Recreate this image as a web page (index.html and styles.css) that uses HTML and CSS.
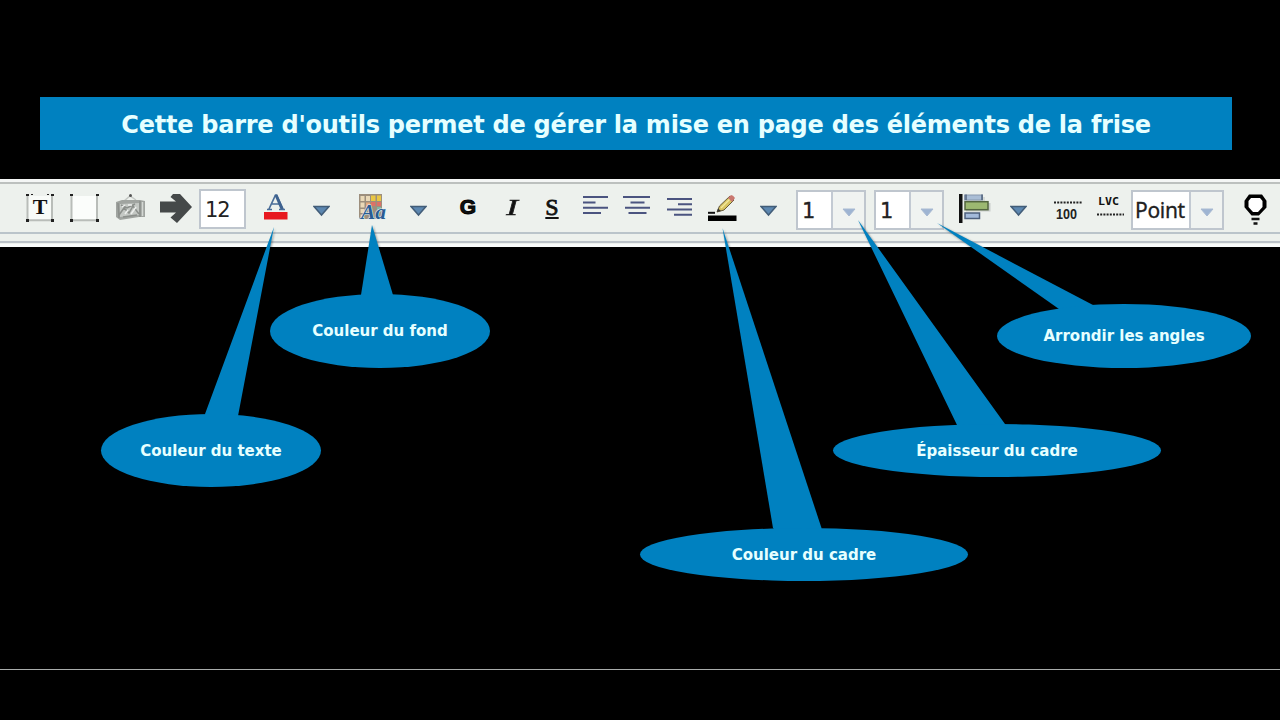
FILE: index.html
```
<!DOCTYPE html>
<html lang="fr">
<head>
  <meta charset="UTF-8" />
  <meta name="viewport" content="width=device-width, initial-scale=1.0"/>
  <title>Barre d'outils de la frise</title>
  <link rel="stylesheet" href="styles.css">
</head>
<body>
  <main class="slide">
    <h1 class="titre"><span>Cette barre d'outils permet de gérer la mise en page des éléments de la frise</span></h1>

    <div class="barre">
      <div class="outils">
        <!-- zone de texte -->
        <svg class="icone i-texte" width="30" height="40" viewBox="0 0 30 40">
          <rect x="3" y="7" width="24" height="24" fill="#f8fbf8"/>
          <path d="M2.5 7V31M27 7V31M2 31.3H28" stroke="#b9bdb9" stroke-width="2" fill="none"/>
          <path d="M1 5h3v2H1zM6 5h2v1H6zM22 5h2v1h-2zM26 5h3v2h-3zM1 30h3v3H1zM26 30h3v3h-3z" fill="#222"/>
          <text x="15" y="25" class="t-serif" text-anchor="middle">T</text>
        </svg>
        <!-- cadre vide -->
        <svg class="icone i-cadre" width="31" height="40" viewBox="0 0 31 40">
          <rect x="3" y="7" width="25" height="24" fill="#fbfdfb"/>
          <path d="M2.5 7V31M28 7V31M2 31.3H29" stroke="#b9bdb9" stroke-width="2" fill="none"/>
          <path d="M1 5h3v2H1zM27 5h3v2h-3zM1 30h3v3H1zM27 30h3v3h-3z" fill="#222"/>
        </svg>
        <!-- image -->
        <svg class="icone i-image" width="31" height="40" viewBox="0 0 31 40">
          <path d="M9 12L15 7L21 11" fill="none" stroke="#c4c8c4" stroke-width="1.500"/>
          <circle cx="15.500" cy="6.500" r="1.500" fill="#555"/>
          <path d="M1 13L7 11L25 11L30 12V28L24 28L5 31L1 28z" fill="#a0a4a0"/>
          <path d="M5 15L24 14V26L5 28z" fill="#c4c8c4"/>
          <path d="M4 26L9 19L14 24L18 17L24 25M6 16L12 19L20 15M25 12V28M3 14L4 29M8 28L22 26" fill="none" stroke="#8b8f8b" stroke-width="1.500"/>
          <path d="M10 25L13 21M16 25L21 18M7 18L10 16M13 16H17" fill="none" stroke="#eef0ee" stroke-width="1.500"/>
          <path d="M27.500 13V27" stroke="#d4d8d4" stroke-width="1.500"/>
        </svg>
        <!-- flèche -->
        <svg class="icone i-fleche" width="32" height="40" viewBox="0 0 32 40">
          <path d="M0 12.500H16L10.500 8L13 5H20L32 18L17 34L10.500 28.500L16 23.500H0z" fill="#454949"/>
        </svg>
        <span class="champ taille">12</span>
        <!-- couleur du texte -->
        <svg class="icone i-couleur" width="24" height="40" viewBox="0 0 24 40">
          <path d="M5 20L11.500 6H12.500L19 20M8 15H16M3 20.500H8M15 20.500H21" fill="none" stroke="#4a6d98" stroke-width="1.700"/>
          <path d="M12 6L18 20" stroke="#3e628f" stroke-width="3"/>
          <rect x="0" y="23" width="23.500" height="7.500" fill="#e7191f"/>
        </svg>
        <svg class="icone fl fl1" width="17" height="40" viewBox="0 0 17 40"><path d="M1 17.500H16L8.500 26z"/></svg>
        <!-- couleur du fond -->
        <svg class="icone i-fond" width="28" height="40" viewBox="0 0 28 40">
          <rect x="0" y="5" width="23" height="25" fill="#9d8f7d"/>
          <path d="M1.500 7h4v5h-4zM7 7h4v5H7zM1.500 13.500h4v5h-4zM1.500 20h4v4h-4zM1.500 25.500h3v3h-3z" fill="#ead9b7"/>
          <path d="M12 6.500h4.500V12H12zM18 6.500h4V12h-4z" fill="#eac743"/>
          <path d="M7 13.500h4v5H7z" fill="#e4aa7b"/>
          <path d="M12 13h4.500v4H12zM18 13h4v4h-4z" fill="#dd7167"/>
          <path d="M18 18h4v5h-4z" fill="#7eb7a1"/>
          <text x="2" y="30" class="t-aa" textLength="25" lengthAdjust="spacingAndGlyphs">Aa</text>
        </svg>
        <svg class="icone fl fl2" width="17" height="40" viewBox="0 0 17 40"><path d="M1 17.500H16L8.500 26z"/></svg>

        <span class="lettre gras">G</span>
        <span class="lettre ital">I</span>
        <span class="lettre soul">S</span>

        <!-- alignements -->
        <svg class="icone al al1" width="26" height="40" viewBox="0 0 26 40"><path d="M1 8H26M1 13.500H13.500M1 18.700H26M1 24H19"/></svg>
        <svg class="icone al al2" width="27" height="40" viewBox="0 0 27 40"><path d="M0 8H27M7.500 13.500H21.500M2 18.700H27M5.500 24H23.500"/></svg>
        <svg class="icone al al3" width="26" height="40" viewBox="0 0 26 40"><path d="M0 10H25M11 15.300H25M0 20.500H25M7 25.700H25"/></svg>

        <!-- couleur du cadre -->
        <svg class="icone i-crayon" width="30" height="40" viewBox="0 0 30 40">
          <path d="M10 23L12.500 17L23 7L27 11L17 21z" fill="#d7c361" stroke="#665a3b" stroke-width="1"/>
          <path d="M14 19L24 9" stroke="#f2e89c" stroke-width="1.500"/>
          <path d="M21 9L24 6Q26 6 28 9L25 13z" fill="#c9776f"/>
          <path d="M10 23L11 19.500L14 22z" fill="#333"/>
          <path d="M1 23.800H8" stroke="#111" stroke-width="2"/>
          <rect x="1" y="26.500" width="28.500" height="5.500" fill="#000"/>
        </svg>
        <svg class="icone fl fl3" width="17" height="40" viewBox="0 0 17 40"><path d="M1 17.500H16L8.500 26z"/></svg>

        <span class="liste l1"><span class="valeur">1</span><span class="bouton"><svg width="14" height="9" viewBox="0 0 14 9"><path d="M1 1H13L7 8z"/></svg></span></span>
        <span class="liste l2"><span class="valeur">1</span><span class="bouton"><svg width="14" height="9" viewBox="0 0 14 9"><path d="M1 1H13L7 8z"/></svg></span></span>

        <!-- aligner les objets -->
        <svg class="icone i-objets" width="33" height="40" viewBox="0 0 33 40">
          <rect x="7" y="8" width="19" height="5" fill="#d5dad7"/>
          <rect x="7" y="14" width="24.500" height="8.500" fill="#c9cecb"/>
          <rect x="5.500" y="6" width="18" height="5" fill="#a9bdd5" stroke="#8798ad"/>
          <path d="M7 5.500V11M23 5.500V11" stroke="#53647e" stroke-width="1.500"/>
          <rect x="6" y="12.700" width="23" height="8" fill="#9cb871" stroke="#53653f" stroke-width="1.500"/>
          <rect x="6" y="24" width="14.500" height="5.500" fill="#a3badb" stroke="#4d607e" stroke-width="1.500"/>
          <rect x="0" y="5" width="3.500" height="29" fill="#111"/>
        </svg>
        <svg class="icone fl fl4" width="17" height="40" viewBox="0 0 17 40"><path d="M1 17.500H16L8.500 26z"/></svg>

        <!-- graduations -->
        <svg class="icone i-cent" width="28" height="40" viewBox="0 0 28 40">
          <path d="M0 13.500H28" stroke="#222" stroke-width="2" stroke-dasharray="2 1.200"/>
          <text x="2" y="30" class="t-cent" textLength="21" lengthAdjust="spacingAndGlyphs">100</text>
        </svg>
        <svg class="icone i-luc" width="28" height="40" viewBox="0 0 28 40">
          <text x="1" y="16" class="t-luc" textLength="21" lengthAdjust="spacingAndGlyphs">LVC</text>
          <path d="M0 25.500H27" stroke="#222" stroke-width="2" stroke-dasharray="2 1.200"/>
        </svg>

        <span class="liste l3"><span class="valeur">Point</span><span class="bouton"><svg width="14" height="9" viewBox="0 0 14 9"><path d="M1 1H13L7 8z"/></svg></span></span>

        <!-- ampoule -->
        <svg class="icone i-ampoule" width="25" height="40" viewBox="0 0 25 40">
          <path d="M6.500 6.500H18.500L22.500 12V18L15.500 25.500H9L2.500 18V12z" fill="#000" stroke="#000" stroke-width="2"/>
          <path d="M8 9H17L19.500 12V18L15 23H10L5.500 18V12z" fill="#fff"/>
          <path d="M8.500 30H16.500M10.500 34.500H14.500" stroke="#111" stroke-width="2.500"/>
        </svg>
      </div>
      <div class="rebord"></div>
    </div>

    <!-- pointes des bulles -->
    <svg class="pointes" width="1280" height="720" viewBox="0 0 1280 720">
      <path d="M274 227L205 414L212 440L236 430L238 416z"/>
      <path d="M372 225L361 295L370 320L395 310L393 295z"/>
      <path d="M722.500 228L773 528L790 545L822 535L821.500 528z"/>
      <path d="M858 220L957 425L980 440L1010 430L1005 424z"/>
      <path d="M937 223L1059 309L1090 320L1105 312L1093 305z"/>
    </svg>

    <div class="bulle b-texte"><span>Couleur du texte</span></div>
    <div class="bulle b-fond"><span>Couleur du fond</span></div>
    <div class="bulle b-cadre"><span>Couleur du cadre</span></div>
    <div class="bulle b-epais"><span>Épaisseur du cadre</span></div>
    <div class="bulle b-angles"><span>Arrondir les angles</span></div>

    <hr class="filet">
  </main>
</body>
</html>
```

FILE: styles.css
```
body {
  margin: 0;
  background: #000;
  font-family: "DejaVu Sans", Verdana, sans-serif;
}

.slide {
  position: relative;
  display: flex;
  flex-direction: column;
  width: 1280px;
  height: 720px;
  box-sizing: border-box;
  padding: 97px 0 50px;
  overflow: hidden;
}

.titre {
  display: flex;
  align-items: center;
  justify-content: center;
  margin: 0 48px 0 40px;
  height: 53px;
  padding-top: 2px;
  box-sizing: border-box;
  background: #0081c0;
  color: #e6ffff;
  font-size: 24px;
  font-weight: bold;
  letter-spacing: -0.25px;
  white-space: nowrap;
}

.barre {
  margin-top: 29px;
  height: 68px;
  box-sizing: border-box;
  border-top: 3px solid #f4f6f5;
  border-bottom: 3px solid #fafcfb;
  background: #edf1ed;
}

.outils {
  display: flex;
  align-items: flex-start;
  height: 52px;
  box-sizing: border-box;
  padding-top: 5px;
  border-top: 2px solid #bcc0be;
  border-bottom: 2px solid #bac4ca;
}

.rebord {
  height: 9px;
  box-sizing: border-box;
  border-bottom: 2px solid #bcc3c9;
}

.icone {
  display: block;
  flex: none;
}

.i-texte { margin-left: 25px; }
.i-cadre { margin-left: 14px; }
.i-image { margin-left: 15px; }
.i-fleche { margin-left: 14px; }
.i-couleur { margin-left: 18px; }
.i-fond { margin-left: 29px; }
.i-crayon { margin-left: 14px; }
.i-objets { margin-left: 15px; }
.i-cent { margin-left: 27px; }
.i-luc { margin-left: 15px; }
.i-ampoule { margin-left: 19px; }

.fl { fill: #5c87b0; stroke: #425d78; stroke-width: 1.5; }
.fl1 { margin-left: 25px; }
.fl2 { margin-left: 23px; }
.fl3 { margin-left: 23px; }
.fl4 { margin-left: 18px; }

.al { fill: none; stroke: #4b5480; stroke-width: 2; }
.al1 { margin-left: 22px; }
.al2 { margin-left: 15px; }
.al3 { margin-left: 17px; }

.champ, .liste {
  flex: none;
  display: flex;
  box-sizing: border-box;
  height: 40px;
  border: 2px solid #bfc6ce;
  background: #fff;
  color: #222;
  font-family: "DejaVu Sans", Tahoma, sans-serif;
  font-size: 21px;
  line-height: 38px;
}

.taille {
  width: 47px;
  margin-left: 7px;
  padding-left: 4px;
  letter-spacing: -1px;
}

.liste { margin-top: 1px; }
.l1 { width: 70px; margin-left: 19px; }
.l2 { width: 70px; margin-left: 8px; }
.l3 { width: 93px; margin-left: 6px; }

.valeur {
  flex: 1;
  min-width: 0;
  padding-left: 4px;
  -webkit-text-stroke: 0.3px #222;
}

.l3 .valeur {
  padding-left: 2px;
  font-family: "Noto Sans", sans-serif;
  line-height: 37px;
  letter-spacing: -0.3px;
}

.bouton {
  display: flex;
  align-items: center;
  justify-content: center;
  flex: none;
  width: 33px;
  padding-top: 5px;
  box-sizing: border-box;
  border-left: 2px solid #c3cad3;
  background: #f0f3f1;
}

.bouton svg { fill: #9eb4d2; stroke: #a9bad2; }

.lettre {
  flex: none;
  color: #111;
  text-align: center;
}

.gras {
  width: 20px;
  margin-left: 31px;
  font: bold 21px/35px "Liberation Sans", Arial, sans-serif;
  -webkit-text-stroke: 1px #000;
}

.ital {
  width: 18px;
  margin-left: 25px;
  font: italic 24px/36px "Liberation Serif", serif;
  -webkit-text-stroke: 0.6px #222;
}

/* I à empattements, plus large que la police */
.ital {
  transform: scaleX(1.45);
}

.soul {
  width: 16px;
  margin-left: 23px;
  font: 24px/36px "Liberation Serif", serif;
  -webkit-text-stroke: 0.8px #111;
  text-decoration: underline;
  text-decoration-thickness: 2px;
  text-underline-offset: 2px;
}

.t-serif { font: bold 22px "Liberation Serif", serif; fill: #111; }
.t-aa { font: italic bold 22px "Liberation Serif", serif; fill: #285c94; stroke: #e4eeee; stroke-width: 1.2px; paint-order: stroke; }
.t-cent { font: bold 15px "Liberation Sans", sans-serif; fill: #222; }
.t-luc { font: bold 10px "DejaVu Sans Mono", monospace; fill: #111; }

.pointes {
  position: absolute;
  left: 0;
  top: 0;
  fill: #0081c0;
  filter: drop-shadow(1px 1px 1px rgba(0,0,0,0.4));
}

.bulle {
  position: absolute;
  display: flex;
  align-items: center;
  justify-content: center;
  border-radius: 50%;
  background: #0081c0;
  color: #e6ffff;
  font-size: 15px;
  font-weight: bold;
  white-space: nowrap;
}

.b-texte { left: 101px; top: 414px; width: 220px; height: 73px; }
.b-fond { left: 270px; top: 294px; width: 220px; height: 74px; }
.b-cadre { left: 640px; top: 528px; width: 328px; height: 53px; }
.b-epais { left: 833px; top: 424px; width: 328px; height: 53px; }
.b-angles { left: 997px; top: 304px; width: 254px; height: 64px; }

.filet {
  width: 100%;
  margin: auto 0 0;
  border: 0;
  border-top: 1px solid #a9adab;
}
```
